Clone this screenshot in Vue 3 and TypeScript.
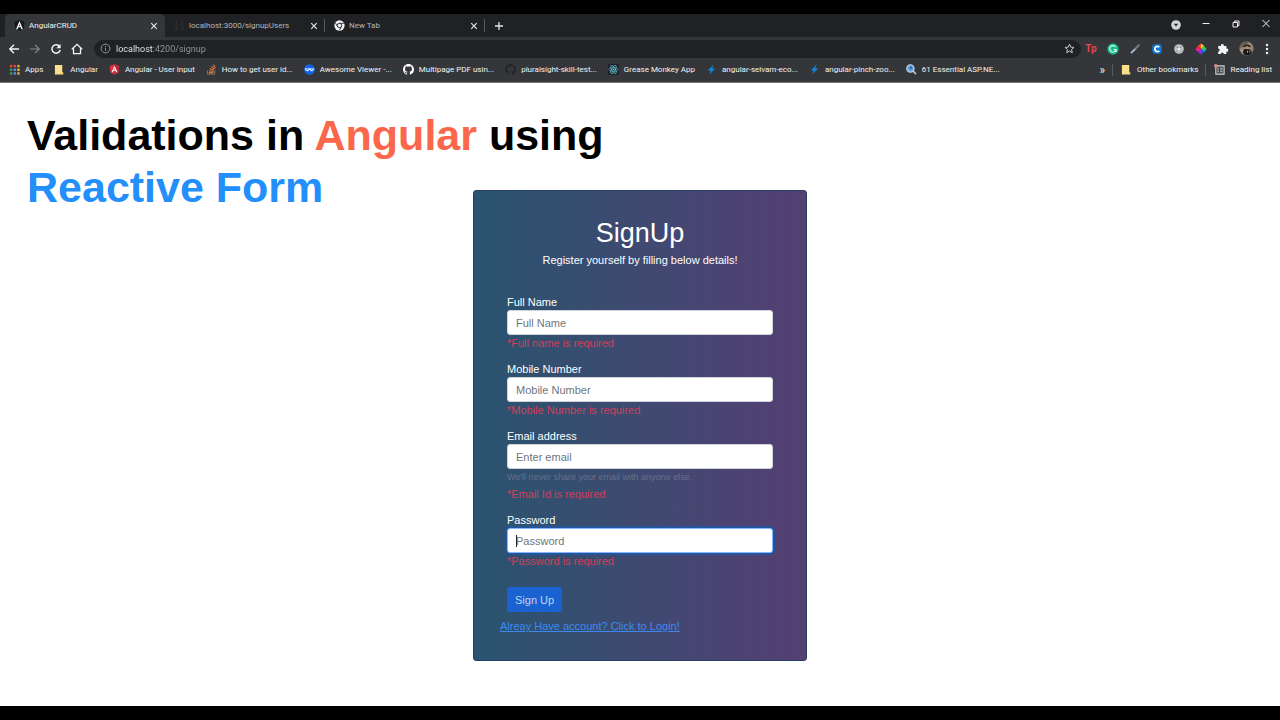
<script setup lang="ts">
import { reactive } from 'vue'

interface Tab { id: string; title: string; icon: string; active?: boolean }
interface Bookmark { title: string; icon: string }
interface Field { id: string; label: string; placeholder: string; type: string; error: string; hint?: string; focused?: boolean }

const tabs: Tab[] = [
  { id: 'crud', title: 'AngularCRUD', icon: 'shield-dark', active: true },
  { id: 'users', title: 'localhost:3000/signupUsers', icon: 'json' },
  { id: 'new', title: 'New Tab', icon: 'chrome' },
]

const bookmarks: Bookmark[] = [
  { title: 'Apps', icon: 'apps' },
  { title: 'Angular', icon: 'folder' },
  { title: 'Angular - User input', icon: 'shield' },
  { title: 'How to get user id...', icon: 'stack' },
  { title: 'Awesome Viewer -...', icon: 'viewer' },
  { title: 'Multipage PDF usin...', icon: 'github' },
  { title: 'pluralsight-skill-test...', icon: 'github-dim' },
  { title: 'Grease Monkey App', icon: 'react' },
  { title: 'angular-selvam-eco...', icon: 'bolt' },
  { title: 'angular-pinch-zoo...', icon: 'bolt' },
  { title: '61 Essential ASP.NE...', icon: 'search' },
]

const fields: Field[] = [
  { id: 'fullName', label: 'Full Name', placeholder: 'Full Name', type: 'text', error: '*Full name is required' },
  { id: 'mobile', label: 'Mobile Number', placeholder: 'Mobile Number', type: 'text', error: '*Mobile Number is required' },
  { id: 'email', label: 'Email address', placeholder: 'Enter email', type: 'email', error: '*Email Id is required', hint: "We'll never share your email with anyone else." },
  { id: 'password', label: 'Password', placeholder: 'Password', type: 'password', error: '*Password is required', focused: true },
]

const model = reactive<Record<string, string>>({ fullName: '', mobile: '', email: '', password: '' })
const appColors = ['#e8453c', '#e8453c', '#f0a030', '#3f9d58', '#5b8def', '#f0b840', '#3f9d58', '#5b8def', '#e6b23c']
</script>

<template>
  <div class="screen">
    <header class="browser">
      <div class="strip">
        <div v-for="t in tabs" :key="t.id" class="tab" :class="{ active: t.active }">
          <button class="tab-main" type="button">
            <svg v-if="t.icon === 'shield-dark'" class="ico" viewBox="0 0 12 12">
              <path d="M6 0 11.5 2 10.700 9.300 6 12 1.300 9.300 .5 2z" fill="#17181a" />
              <path d="M6 1.200 9.700 10H8.100L7.300 8H4.700L3.900 10H2.300zM6 4.500 5.200 6.700h1.600z" fill="#fff" fill-rule="evenodd" />
            </svg>
            <svg v-else-if="t.icon === 'json'" class="ico" viewBox="0 0 12 12" fill="none" stroke="#343538" stroke-width="1">
              <path d="M4 1.500H2.500V5L1.500 6l1 1v3.500H4M8 1.500h1.500V5l1 1-1 1v3.500H8M4.500 5v2M7.500 5v2" />
            </svg>
            <svg v-else class="ico" viewBox="0 0 12 12">
              <circle cx="6" cy="6" r="5.600" fill="#f1f3f4" />
              <circle cx="6" cy="6" r="2.400" fill="none" stroke="#202124" stroke-width="1" />
              <path d="M6 3.600h5M3.900 7.200 1.400 3M8.100 7.200 5.700 11.400" stroke="#202124" stroke-width=".9" />
            </svg>
            <span>{{ t.title }}</span>
          </button>
          <button class="close" type="button" aria-label="Close tab">
            <svg viewBox="0 0 8 8"><path d="M1.200 1.200l5.600 5.600M6.800 1.200 1.200 6.800" /></svg>
          </button>
        </div>
        <button class="plus" type="button" aria-label="New tab">
          <svg viewBox="0 0 10 10"><path d="M5 1v8M1 5h8" /></svg>
        </button>
        <div class="window">
          <button type="button" aria-label="Search tabs">
            <svg viewBox="0 0 12 12"><circle cx="6" cy="7" r="4.800" fill="#d3d4d6" /><path d="M3.800 5.700h4.400L6 8.500z" fill="#202124" /></svg>
          </button>
          <button type="button" aria-label="Minimize">
            <svg viewBox="0 0 12 12" fill="none" stroke="#eee"><path d="M2.500 5.500h7" /></svg>
          </button>
          <button type="button" aria-label="Restore">
            <svg viewBox="0 0 12 12" fill="none" stroke="#eee"><path d="M3 4.500h4.500V9H3zM4.500 4.500V3H9v4.500H7.500" /></svg>
          </button>
          <button type="button" aria-label="Close window">
            <svg viewBox="0 0 12 12" fill="none" stroke="#eee"><path d="M2.500 2 9.500 9M9.500 2 2.500 9" /></svg>
          </button>
        </div>
      </div>

      <div class="toolbar">
        <div class="nav">
          <button type="button" aria-label="Back">
            <svg viewBox="0 0 12 12" fill="none" stroke="#f1f3f4" stroke-width="1.400"><path d="M11 6H2M6 1.800 1.800 6 6 10.200" /></svg>
          </button>
          <button type="button" aria-label="Forward">
            <svg viewBox="0 0 12 12" fill="none" stroke="#85878a" stroke-width="1.200"><path d="M1 6h9M6 1.800 10.200 6 6 10.200" /></svg>
          </button>
          <button type="button" aria-label="Reload">
            <svg viewBox="0 0 12 12" fill="none" stroke="#f1f3f4" stroke-width="1.500"><path d="M9.600 3.600A4.200 4.200 0 1 0 10.200 7" /><path d="M10.600 1v4.300H6.300z" fill="#f1f3f4" stroke="none" /></svg>
          </button>
          <button type="button" aria-label="Home">
            <svg viewBox="0 0 12 12" fill="none" stroke="#f1f3f4" stroke-width="1.300"><path d="M.8 6.300 6 1.300l5.200 5M2.500 5.500v5.200h7V5.500" /></svg>
          </button>
        </div>
        <div class="address">
          <svg viewBox="0 0 12 12" fill="none" stroke="#9aa0a6"><circle cx="6" cy="6" r="4.800" /><path d="M6 5.200v3.300M6 3.200v1.100" /></svg>
          <input type="text" aria-label="Address" value="localhost:4200/signup" spellcheck="false" />
          <button type="button" aria-label="Bookmark this page">
            <svg viewBox="0 0 12 12" fill="none" stroke="#d5d7da"><path d="M6 1.300 7.400 4.500l3.500.3-2.700 2.300.9 3.500L6 8.700l-3.100 1.900.9-3.500L1.100 4.800l3.500-.3z" /></svg>
          </button>
        </div>
        <div class="extensions">
          <button class="tp" type="button">Tp</button>
          <button type="button" aria-label="Grammar">
            <svg viewBox="0 0 12 12"><circle cx="6" cy="6" r="5.700" fill="#15b886" /><path d="M8.600 4A3.200 3.200 0 1 0 9.100 6.500H6.600M9.100 6.500V9" fill="none" stroke="#e8fff7" stroke-width="1.100" /></svg>
          </button>
          <button type="button" aria-label="Color picker">
            <svg viewBox="0 0 12 12"><path d="M2 10.200 6.800 5.300" stroke="#a9bdd5" stroke-width="1.900" /><path d="M6.300 5.800 10.300 1.700" stroke="#777b86" stroke-width="2" /><path d="M5.700 3.900 8 6.200" stroke="#596b91" /></svg>
          </button>
          <button type="button" aria-label="Clipboard">
            <svg viewBox="0 0 12 12"><path d="M3 1.200h6.500l1.300 2v5.600l-1.300 2H3L1.200 8.500v-5z" fill="#0c78d4" /><path d="M8.300 4.200a2.600 2.600 0 1 0 0 3.600" fill="none" stroke="#fff" stroke-width="1.800" /></svg>
          </button>
          <button type="button" aria-label="Tools">
            <svg viewBox="0 0 12 12"><circle cx="6" cy="6" r="4.800" fill="#bfc0c1" /><path d="M3.500 3.500l5 5M8.500 3.500l-5 5" stroke="#737578" stroke-dasharray="2 1" /><circle cx="6" cy="6" r="1.200" fill="#eee" /></svg>
          </button>
          <button type="button" aria-label="Palette">
            <svg viewBox="0 0 12 12"><path d="M6 6V.5L2.800 3z" fill="#ff4c1e" /><path d="M6 6V.5L9.200 3z" fill="#ffd51c" /><path d="M6 6h5.500L9.200 3z" fill="#46cb23" /><path d="M6 6h5.500L9.200 9z" fill="#16b5df" /><path d="M6 6v5.500L9.200 9z" fill="#2859ef" /><path d="M6 6v5.500L2.800 9z" fill="#9b23dc" /><path d="M6 6H.5L2.800 9z" fill="#ea23ad" /><path d="M6 6H.5L2.800 3z" fill="#f02040" /></svg>
          </button>
          <button type="button" aria-label="Extensions">
            <svg viewBox="0 0 12 12"><path d="M1.200 3h2.700a1.500 1.500 0 1 1 2.900 0h2.600v2.700a1.500 1.500 0 1 1 0 2.900V11H6.800a1.500 1.500 0 0 0-3 0H1.200V8.500a1.500 1.500 0 0 0 0-3z" fill="#f3f4f5" /></svg>
          </button>
          <button class="avatar" type="button" aria-label="Profile">
            <svg viewBox="0 0 16 16"><circle cx="8" cy="8" r="7.500" fill="#968777" /><path d="M1 5.500A7.500 7.500 0 0 1 10 1L8 4 4 5 2 8z" fill="#635d51" /><path d="M4 5.500Q8 2.500 12 5l1 1.500H4z" fill="#27221f" /><circle cx="8.500" cy="7.200" r="2" fill="#b18b70" /><path d="M3 10l4-1.500 5 .5 2 3A7.500 7.500 0 0 1 6 15z" fill="#161719" /><path d="M2 9l3 1-1 2z" fill="#c9b69c" /><path d="M8.500 10.500h1v2h-1zM11 10.500h1v1.500h-1z" fill="#b9b9b9" /></svg>
          </button>
          <button type="button" aria-label="Menu">
            <svg viewBox="0 0 12 12" fill="#f1f3f4"><circle cx="6" cy="2" r="1.200" /><circle cx="6" cy="6" r="1.200" /><circle cx="6" cy="10" r="1.200" /></svg>
          </button>
        </div>
      </div>

      <nav class="bookmarks" aria-label="Bookmarks">
        <a v-for="b in bookmarks" :key="b.title" href="#">
          <svg v-if="b.icon === 'apps'" class="ico" viewBox="0 0 12 12">
            <rect v-for="(c, i) in appColors" :key="i" :x="1 + (i % 3) * 4" :y="1 + Math.floor(i / 3) * 4" width="2.600" height="2.600" :fill="c" />
          </svg>
          <svg v-else-if="b.icon === 'folder'" class="ico" viewBox="0 0 12 12"><path d="M1 1h8v8h1v2.500H1z" fill="#fbe08a" /><path d="M9 9v2.500h1V9z" fill="#e2b950" /></svg>
          <svg v-else-if="b.icon === 'shield'" class="ico" viewBox="0 0 12 12">
            <path d="M6 .3 11.200 2.200 10.400 9.200 6 11.700 1.600 9.200 .8 2.200z" fill="#dd3341" /><path d="M6 .3 11.200 2.200 10.400 9.200 6 11.700z" fill="#b92b3a" />
            <path d="M6 1.800 9.200 9H7.900L7.200 7.400H4.800L4.100 9H2.800zM6 4.300 5.300 6.200h1.400z" fill="#fff" fill-rule="evenodd" />
          </svg>
          <svg v-else-if="b.icon === 'stack'" class="ico" viewBox="0 0 12 12" fill="none">
            <path d="M1.500 7v4h8V7" stroke="#8b7f77" /><path d="M3 9.400h5M3.200 7.300l4.900.8M4 4.800l4.500 2M5.700 2.500l3.500 3.200M8 .7l2.300 4" stroke="#d77b32" stroke-width="1.200" />
          </svg>
          <svg v-else-if="b.icon === 'viewer'" class="ico" viewBox="0 0 12 12"><circle cx="6" cy="6" r="5.800" fill="#1262e8" /><path d="M1 4.700h10v1.500L9 8H7.500L6 6.300 4.500 8H3L1 6.200z" fill="#c6e8ff" /><path d="M2.500 5.700h2M7.500 5.700h2" stroke="#1262e8" stroke-width=".8" /></svg>
          <svg v-else-if="b.icon.startsWith('github')" class="ico" viewBox="0 0 16 16" :fill="b.icon === 'github' ? '#fff' : '#232529'">
            <path d="M8 0C3.580 0 0 3.580 0 8c0 3.540 2.290 6.530 5.470 7.590.4.070.55-.17.55-.38V13.720c-2.230.48-2.700-1.080-2.700-1.080-.36-.92-.89-1.170-.89-1.170-.73-.5.05-.49.05-.49.8.06 1.230.83 1.230.83.71 1.230 1.870.87 2.330.67.07-.52.28-.88.51-1.080-1.780-.2-3.650-.89-3.650-3.960 0-.87.31-1.590.83-2.150-.09-.2-.36-1.020.07-2.120 0 0 .67-.22 2.200.82a7.700 7.700 0 0 1 4 0c1.530-1.040 2.200-.82 2.200-.82.43 1.100.16 1.920.08 2.120.51.56.82 1.270.82 2.150 0 3.080-1.870 3.750-3.660 3.950.29.25.54.73.54 1.480v2.200c0 .21.15.46.55.38A8 8 0 0 0 16 8c0-4.420-3.580-8-8-8z" />
          </svg>
          <svg v-else-if="b.icon === 'react'" class="ico" viewBox="0 0 12 12"><rect width="12" height="12" rx="1" fill="#202428" /><g fill="none" stroke="#5cb9cd" stroke-width=".8"><ellipse cx="6" cy="6" rx="5" ry="2" /><ellipse cx="6" cy="6" rx="5" ry="2" transform="rotate(60 6 6)" /><ellipse cx="6" cy="6" rx="5" ry="2" transform="rotate(120 6 6)" /></g><circle cx="6" cy="6" r="1" fill="#5cb9cd" /></svg>
          <svg v-else-if="b.icon === 'bolt'" class="ico" viewBox="0 0 12 12"><path d="M8.500.5 2 7h3.300L3.500 11.500 10 5H6.700z" fill="#1389e4" /></svg>
          <svg v-else class="ico" viewBox="0 0 12 12"><path d="M7 7l4 4" stroke="#b4b9c1" stroke-width="2" /><circle cx="4.800" cy="4.800" r="4" fill="#5d9fe0" stroke="#c5d5e4" stroke-width="1.300" /><circle cx="5.500" cy="4" r="1.200" fill="#2c5d94" /></svg>
          <span>{{ b.title }}</span>
        </a>
        <div class="bookmark-end">
          <button class="more" type="button" aria-label="More bookmarks">»</button>
          <a class="divided" href="#">
            <svg class="ico" viewBox="0 0 12 12"><path d="M1 1h8v8h1v2.500H1z" fill="#fbe08a" /><path d="M9 9v2.500h1V9z" fill="#e2b950" /></svg>
            <span>Other bookmarks</span>
          </a>
          <a class="divided" href="#">
            <svg class="ico" viewBox="0 0 12 12"><path d="M2 2h9v9H2z" fill="none" stroke="#d5d6d8" stroke-width="1.200" /><path d="M3.500 4.500h2M3.500 6.500h2M3.500 8.500h2M6.500 4.500h3M6.500 6.500h3M6.500 8.500h3" stroke="#d5d6d8" /><circle cx="2" cy="2" r="2" fill="#e58b88" /></svg>
            <span>Reading list</span>
          </a>
        </div>
      </nav>
    </header>

    <main class="page">
      <h1>Validations in <span class="tomato">Angular</span> using<br /><span class="blue">Reactive Form</span></h1>
      <form class="card" novalidate @submit.prevent>
        <h2>SignUp</h2>
        <p class="lead">Register yourself by filling below details!</p>
        <div v-for="f in fields" :key="f.id" class="field">
          <label :for="f.id">{{ f.label }}</label>
          <div class="control" :class="{ focused: f.focused }">
            <input :id="f.id" v-model="model[f.id]" :type="f.type" :placeholder="f.placeholder" autocomplete="off" />
          </div>
          <small v-if="f.hint">{{ f.hint }}</small>
          <span class="error">{{ f.error }}</span>
        </div>
        <button class="submit" type="submit">Sign Up</button>
        <a class="login" href="#">Alreay Have account? Click to Login!</a>
      </form>
    </main>
  </div>
</template>

<style>
body { margin: 0; background: #fff; }
</style>

<style scoped>
* { box-sizing: border-box; }
.screen {
  min-height: 100vh;
  display: flex;
  flex-direction: column;
  border-top: 14px solid #000;
  border-bottom: 14px solid #000;
  background: #fff;
  overflow: hidden;
}
button { border: 0; padding: 0; margin: 0; background: none; color: inherit; font: inherit; }
svg { display: block; flex: none; }
.browser {
  font: 8px/12px Roboto, "Noto Sans", sans-serif;
  color: #f1f3f4;
  background: #35363a;
  border-bottom: 1px solid #77787b;
}
.ico { width: 11px; height: 11px; }
.strip { display: flex; height: 23px; padding-left: 5px; background: #202124; }
.tab {
  width: 160px;
  display: flex;
  align-items: center;
  padding: 0 7px 0 9px;
  color: #b4b7bb;
  position: relative;
}
.tab.active { background: #35363a; color: #f1f3f4; border-radius: 5px 5px 0 0; }
.tab:not(.active)::after {
  content: "";
  position: absolute;
  right: 0;
  top: 5px;
  bottom: 5px;
  width: 1px;
  background: #55575b;
}
.tab-main { flex: 1; display: flex; align-items: center; gap: 4px; white-space: nowrap; }
.close svg { width: 8px; height: 8px; fill: none; stroke: #e3e4e6; stroke-width: 1.2; }
.plus { width: 28px; display: grid; place-items: center; }
.plus svg { width: 10px; height: 10px; fill: none; stroke: #e3e4e6; stroke-width: 1.3; }
.window { margin-left: auto; display: flex; align-items: center; gap: 18px; padding: 0 8px 4px 0; }
.window svg { width: 12px; height: 12px; }
.toolbar { display: flex; align-items: center; height: 23px; padding: 0 8px; }
.nav { display: flex; gap: 9px; width: 86px; }
.nav svg { width: 12px; height: 12px; }
.address {
  flex: 1;
  display: flex;
  align-items: center;
  gap: 5px;
  height: 18px;
  padding: 0 6px;
  border-radius: 9px;
  background: #202124;
}
.address svg { width: 11px; height: 11px; }
.address input {
  flex: 1;
  min-width: 0;
  height: 18px;
  padding: 0;
  border: 0;
  outline: 0;
  font: 9px/18px Roboto, "Noto Sans", sans-serif;
  color: transparent;
  background: linear-gradient(90deg, #f1f3f4 37px, #96999e 37px);
  background-clip: text;
  -webkit-background-clip: text;
}
.extensions { display: flex; align-items: center; gap: 10px; padding-left: 4px; }
.extensions button { width: 12px; display: grid; place-items: center; }
.extensions button:last-child { margin-right: -1px; }
.extensions svg { width: 12px; height: 12px; }
.extensions .avatar svg { width: 15px; height: 15px; }
.tp { color: #e8444c; font: bold 10px/12px "Roboto", sans-serif; }
.bookmarks { display: flex; align-items: center; gap: 11px; height: 22px; padding: 0 8px 3px 9px; }
.bookmarks a {
  display: flex;
  align-items: center;
  gap: 5px;
  color: inherit;
  text-decoration: none;
  white-space: nowrap;
}
.bookmark-end { display: flex; align-items: center; gap: 7px; margin-left: auto; }
.bookmark-end .divided { border-left: 1px solid #5b5c60; padding-left: 8px; }
.more { font-size: 12px; }

.page { flex: 1; display: grid; grid-template-columns: minmax(0, 1fr); }
.page > * { grid-area: 1 / 1; }
h1 {
  margin: 26px 0 0 27px;
  justify-self: start;
  align-self: start;
  font: bold 43px/52px "Liberation Sans", Arial, sans-serif;
  color: #000;
}
.tomato { color: #fb674a; }
.blue { color: #228ffa; }
.card {
  width: 334px;
  justify-self: center;
  align-self: start;
  display: flex;
  flex-direction: column;
  align-items: stretch;
  margin: 107px 0 24px;
  padding: 24px 33px 26px;
  border: 1px solid #263f65;
  border-radius: 3px;
  background: linear-gradient(90deg, #29546f, #553f73);
  font: 11px/16px "Liberation Sans", Arial, sans-serif;
  color: #fff;
}
h2 { margin: 0; text-align: center; font-size: 27px; line-height: 36px; font-weight: 400; }
.lead { margin: 1px 0 26px; text-align: center; }
.field { display: flex; flex-direction: column; margin-bottom: 10px; }
.control { display: flex; border-radius: 3px; position: relative; }
.control input {
  width: 100%;
  height: 25px;
  padding: 0 8px;
  border: 1px solid #ced4da;
  border-radius: 3px;
  outline: 0;
  background: #fff;
  color: #212529;
  font: inherit;
}
.control input::placeholder { color: #6f767d; opacity: 1; }
.control.focused input { border-color: #86b7fe; box-shadow: 0 0 0 2px #24549a; }
.control.focused::after {
  content: "";
  position: absolute;
  left: 9px;
  top: 7px;
  width: 1px;
  height: 12px;
  background: #222;
}
small { font-size: 9px; line-height: 17px; color: #66708b; }
.error { color: #cf3f58; }
.submit {
  align-self: flex-start;
  height: 25px;
  margin-top: 8px;
  padding: 0 8px;
  border-radius: 3px;
  background: #1a62d2;
  color: #c3d3ef;
}
.login { align-self: flex-start; margin: 6px 0 0 -7px; color: #3c8af0; text-decoration: underline; }
</style>
